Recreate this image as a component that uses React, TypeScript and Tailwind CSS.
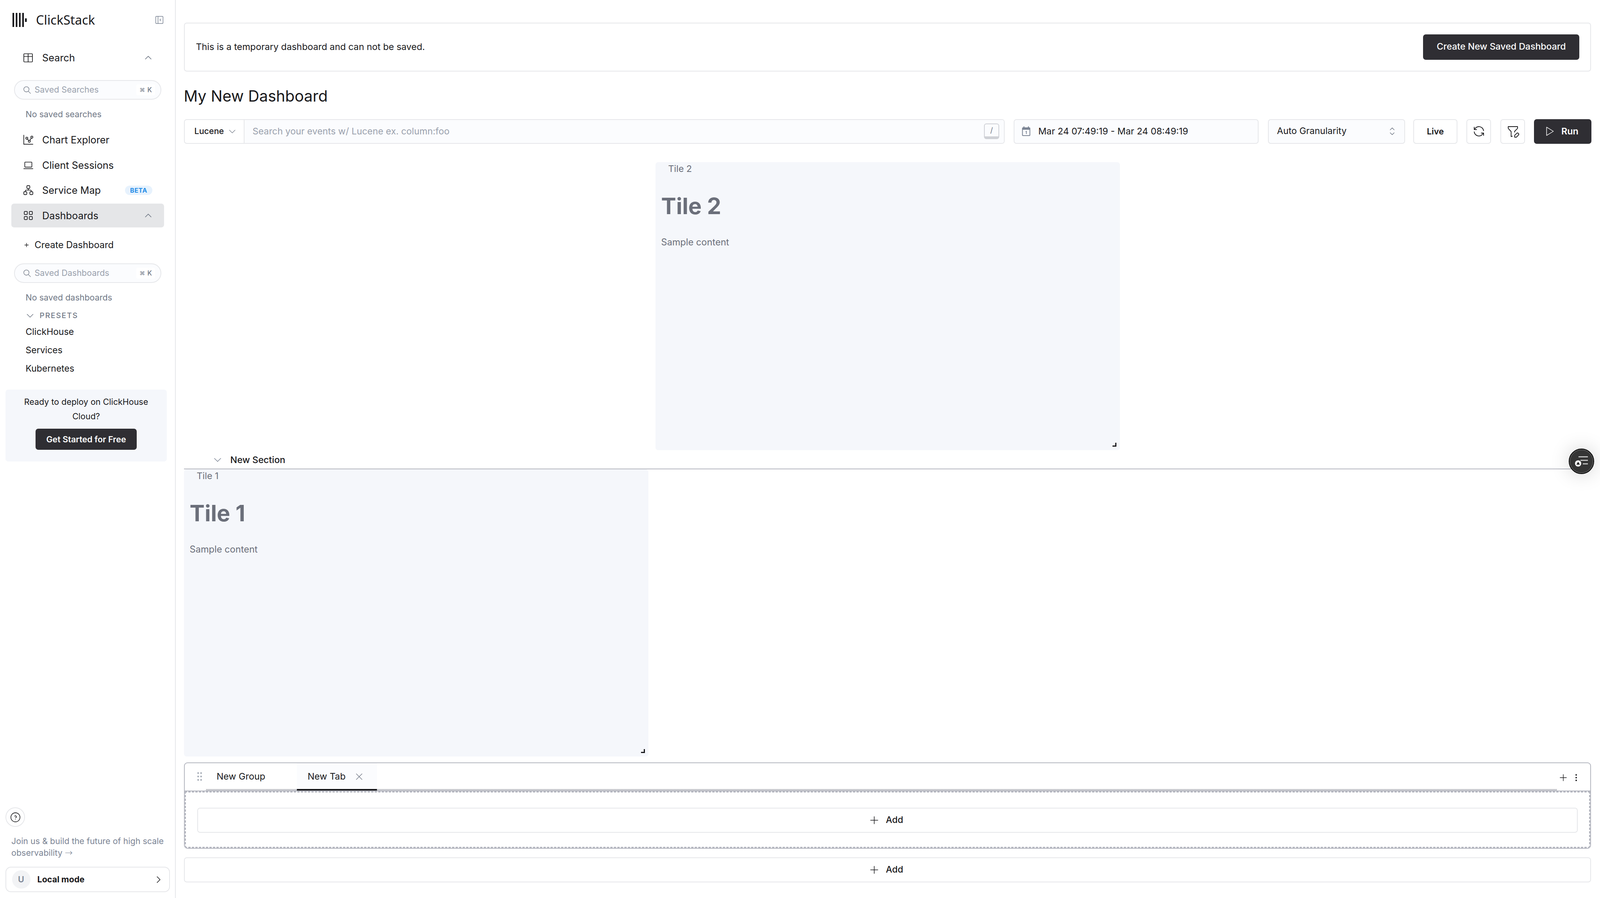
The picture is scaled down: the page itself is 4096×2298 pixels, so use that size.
import React from "react";
import {
  TbChartDots, TbDeviceLaptop, TbSitemap, TbLayoutGrid, TbLayoutSidebarLeftCollapse, TbChevronUp, TbChevronDown,
  TbSearch, TbHelpCircle, TbChevronRight, TbSelector, TbRefresh, TbGripVertical, TbPlus, TbDotsVertical, TbX,
  TbPlayerPlay, TbFilterEdit,
} from "react-icons/tb";

function Logo() {
  return (
    <svg width="37" height="36" viewBox="0 0 37 36" fill="#18181b">
      <rect x="0" y="0" width="4.2" height="36" />
      <rect x="8.3" y="0" width="4.2" height="36" />
      <rect x="16.6" y="0" width="4.2" height="36" />
      <rect x="24.9" y="0" width="4.2" height="36" />
      <rect x="32" y="14" width="4.5" height="9" />
    </svg>
  );
}

function TableIcon() {
  return (
    <svg width="24" height="24" viewBox="0 0 24 24" fill="none" stroke="#18181b" strokeWidth="1.7">
      <rect x="1" y="1.5" width="22" height="21" rx="1.5" />
      <path d="M1 8.5h22M12 1.5v21" />
    </svg>
  );
}

function CalIcon() {
  return (
    <svg width="22" height="26" viewBox="0 0 22 26">
      <rect x="0.5" y="3" width="21" height="22" rx="2.5" fill="#7b8494" />
      <rect x="4" y="0.5" width="2.6" height="5" fill="#7b8494" />
      <rect x="15.4" y="0.5" width="2.6" height="5" fill="#7b8494" />
      <rect x="2.5" y="9" width="17" height="14" rx="1" fill="#fbfcfe" />
      <path d="M9.5 14l2-1v7" stroke="#7b8494" strokeWidth="1.8" fill="none" />
    </svg>
  );
}

function Fab() {
  return (
    <div className="absolute left-[4016px] top-[1148px] w-[65px] h-[65px] rounded-full bg-[#353535] border-2 border-black flex items-center justify-center shadow-[0_0_50px_rgba(0,0,0,0.18)]">
      <div className="w-[61px] h-[61px] rounded-full border-2 border-[#555555] flex items-center justify-center">
        <svg width="34" height="30" viewBox="0 0 34 30">
          <path d="M9 3h24M14 12h19M20 21h13" stroke="#d8d8d8" strokeWidth="2.6" />
          <circle cx="8" cy="20" r="8" fill="#ffffff" />
          <path d="M8 15.5l4.5 7.5h-9z" fill="#1f1f1f" />
        </svg>
      </div>
    </div>
  );
}

function NavRow({ icon, label, right, active }: { icon: React.ReactNode; label: string; right?: React.ReactNode; active?: boolean }) {
  return (
    <div className={`h-[61px] mt-[3.7px] ml-[29px] w-[391px] pl-[31px] pr-[34px] rounded-[7px] flex items-center ${active ? "bg-[#e5e6e8]" : ""}`}>
      <span className="w-[24px] h-[24px] flex items-center justify-center shrink-0">{icon}</span>
      <span className="ml-[24px] text-[25.3px] leading-none text-[#18181b] grow">{label}</span>
      {right}
    </div>
  );
}

function SideInput({ placeholder }: { placeholder: string }) {
  return (
    <div className="h-[50px] ml-[36px] w-[377px] rounded-full border-2 border-[#e6e7ea] bg-[#fbfcfe] flex items-center pl-[20px] pr-[14px]">
      <TbSearch className="text-[#6f7785] shrink-0" size={23} strokeWidth={1.4} />
      <span className="ml-[7.5px] text-[21.5px] leading-none text-[#9aa1ad] grow">{placeholder}</span>
      <span className="rounded-[4px] bg-white px-[8px] h-[28px] flex items-center gap-[6px] text-[#6f7785] text-[17px] leading-none font-medium">
        <span className="text-[14px] font-normal">⌘</span>K
      </span>
    </div>
  );
}

function Sidebar() {
  return (
    <aside className="w-[450px] h-[2298px] shrink-0 border-r-2 border-[#e6e7ea] flex flex-col">
      <div className="h-[102px] pl-[32px] pr-[26px] flex items-center">
        <Logo />
        <span className="ml-[23px] text-[32.5px] leading-none text-[#18181b] grow font-['Noto_Sans',sans-serif]">ClickStack</span>
        <TbLayoutSidebarLeftCollapse className="text-[#7b8494]" size={28} strokeWidth={1.3} />
      </div>
      <div className="h-[61px] mt-[15px]">
        <div className="h-[61px] ml-[29px] w-[391px] pl-[31px] pr-[26.5px] flex items-center">
          <span className="w-[24px] h-[24px] flex items-center justify-center shrink-0"><TableIcon /></span>
          <span className="ml-[24px] text-[25.3px] leading-none text-[#18181b] grow">Search</span>
          <TbChevronUp className="text-[#6f7785]" size={29} strokeWidth={1.2} />
        </div>
      </div>
      <div className="mt-[27px]"><SideInput placeholder="Saved Searches" /></div>
      <div className="mt-[22px] ml-[65.5px] h-[32px] flex items-center text-[21.5px] leading-none text-[#6f7785]">No saved searches</div>
      <div className="mt-[14.3px]">
        <NavRow icon={<TbChartDots size={31} strokeWidth={1.3} className="text-[#18181b] shrink-0" />} label="Chart Explorer" />
        <NavRow icon={<TbDeviceLaptop size={31} strokeWidth={1.3} className="text-[#18181b] shrink-0" />} label="Client Sessions" />
        <NavRow
          icon={<TbSitemap size={31} strokeWidth={1.3} className="text-[#18181b] shrink-0" />}
          label="Service Map"
          right={<span className="h-[24px] px-[13px] -mr-[4px] rounded-full bg-[#e7f2fd] text-[#228be6] text-[16px] font-bold tracking-[0.6px] flex items-center leading-none">BETA</span>}
        />
        <NavRow active icon={<TbLayoutGrid size={31} strokeWidth={1.3} className="text-[#18181b] shrink-0" />} label="Dashboards" right={<TbChevronUp className="text-[#6f7785] -mr-[7.5px]" size={29} strokeWidth={1.2} />} />
      </div>
      <div className="mt-[29px] ml-[60px] h-[32px] flex items-center text-[#18181b]">
        <TbPlus size={16} strokeWidth={2} />
        <span className="ml-[12.5px] text-[23.6px] leading-none">Create Dashboard</span>
      </div>
      <div className="mt-[31px]"><SideInput placeholder="Saved Dashboards" /></div>
      <div className="mt-[22px] ml-[65.5px] h-[32px] flex items-center text-[21.5px] leading-none text-[#6f7785]">No saved dashboards</div>
      <div className="mt-[14px] ml-[62px] h-[32px] flex items-center text-[#6f7785]">
        <TbChevronDown size={30} strokeWidth={1.2} className="shrink-0" />
        <span className="ml-[9.5px] text-[19.2px] leading-none font-medium tracking-[1.9px]">PRESETS</span>
      </div>
      <div className="ml-[65.5px] mt-[2px] flex flex-col text-[23px] leading-[46.8px] text-[#18181b]">
        <span>ClickHouse</span>
        <span>Services</span>
        <span>Kubernetes</span>
      </div>
      <div className="mt-[31px] ml-[14px] w-[413px] h-[184px] rounded-[7px] bg-[#f5f7fb] flex flex-col items-center pt-[13px] text-[21.5px] leading-[37px] text-[#18181b] text-center">
        <span>Ready to deploy on ClickHouse</span>
        <span>Cloud?</span>
        <div className="mt-[13px] w-[259px] h-[54px] rounded-[7px] bg-[#2f2e33] text-white font-semibold flex items-center justify-center text-[21.5px] leading-none">Get Started for Free</div>
      </div>
      <div className="grow" />
      <div className="ml-[14px] w-[50px] h-[50px] rounded-full border-2 border-[#e6e7ea] flex items-center justify-center">
        <TbHelpCircle size={31} strokeWidth={1.25} className="text-[#18181b]" />
      </div>
      <div className="mt-[21px] ml-[29px] text-[21.5px] leading-[30px] text-[#7b8494]">
        <div>Join us &amp; build the future of high scale</div>
        <div>observability <span className="[font-family:'DejaVu_Sans',sans-serif] text-[24px] font-extralight">→</span></div>
      </div>
      <div className="mt-[21px] mb-[15px] ml-[14px] w-[421px] h-[65px] rounded-[14px] border-2 border-[#e6e7ea] flex items-center pl-[14.5px] pr-[12px]">
        <span className="w-[47px] h-[47px] rounded-full bg-[#f2f3f5] text-[#7b8494] font-semibold text-[21.5px] flex items-center justify-center leading-none">U</span>
        <span className="ml-[18px] text-[21.5px] leading-none font-bold text-[#18181b] grow">Local mode</span>
        <TbChevronRight size={30} strokeWidth={1.3} className="text-[#18181b]" />
      </div>
    </aside>
  );
}

function Box({ className, children }: { className: string; children?: React.ReactNode }) {
  return <div className={`h-[63px] rounded-[7px] border-2 border-[#e6e7ea] flex items-center shrink-0 ${className}`}>{children}</div>;
}

function Toolbar() {
  return (
    <div className="mt-[33px] flex items-center">
      <div className="h-[63px] w-[2101.5px] rounded-[7px] border-2 border-[#e6e7ea] flex overflow-hidden shrink-0">
        <div className="w-[153px] border-r-2 border-[#e6e7ea] flex items-center pl-[25px] shrink-0">
          <span className="text-[21.5px] leading-none font-medium text-[#18181b]">Lucene</span>
          <TbChevronDown size={29} strokeWidth={1.1} className="ml-[7px] text-[#6f7785] shrink-0" />
        </div>
        <div className="grow bg-[#fbfcfe] flex items-center pl-[21px] pr-[12px]">
          <span className="text-[23.35px] leading-none text-[#9aa1ad] grow">Search your events w/ Lucene ex. column:foo</span>
          <span className="w-[39px] h-[40px] rounded-[6px] border-2 border-b-[7px] border-[#cfd1d6] bg-[#fbfcfe] flex items-center justify-center text-[19px] leading-none text-[#6f7785]">/</span>
        </div>
      </div>
      <Box className="ml-[23px] w-[627px] bg-[#fbfcfe] pl-[19px]">
        <CalIcon />
        <span className="ml-[20px] text-[23.35px] leading-none text-[#18181b]">Mar 24 07:49:19 - Mar 24 08:49:19</span>
      </Box>
      <Box className="ml-[24px] w-[351px] bg-[#fbfcfe] pl-[21px] pr-[16px]">
        <span className="text-[23.2px] leading-none text-[#18181b] grow">Auto Granularity</span>
        <TbSelector size={30} strokeWidth={1.2} className="text-[#6f7785]" />
      </Box>
      <Box className="ml-[21px] w-[113px] justify-center">
        <span className="text-[22px] leading-none font-semibold text-[#18181b]">Live</span>
      </Box>
      <Box className="ml-[23px] w-[63px] justify-center">
        <TbRefresh size={36} strokeWidth={1.25} className="text-[#18181b] shrink-0" />
      </Box>
      <Box className="ml-[24px] w-[63px] justify-center">
        <TbFilterEdit size={36} strokeWidth={1.25} className="text-[#18181b] shrink-0" />
      </Box>
      <div className="ml-[23px] w-[147px] h-[63px] rounded-[7px] bg-[#2f2e33] flex items-center pl-[23px] shrink-0">
        <TbPlayerPlay size={32} strokeWidth={1.1} className="text-white shrink-0" />
        <span className="ml-[15px] text-[23.35px] leading-none font-semibold text-white">Run</span>
      </div>
    </div>
  );
}

function Tile({ name, className }: { name: string; className: string }) {
  return (
    <div className={`relative w-[1189px] rounded-[7px] bg-[#f5f7fb] text-[#6b6f7a] shrink-0 ${className}`}>
      <div className="h-[34px] pl-[33px] flex items-center text-[23.35px] leading-none">{name}</div>
      <div className="h-[124px] pt-[35px] pl-[15px] flex items-center text-[57.5px] leading-none font-bold">{name}</div>
      <div className="h-[32px] mt-[31px] pl-[15px] flex items-center text-[23.6px] leading-none">Sample content</div>
      <svg className="absolute right-[9px] bottom-[9px]" width="10" height="10" viewBox="0 0 10 10">
        <path d="M8.5 0v8.5H0" fill="none" stroke="#18181b" strokeWidth="3" />
      </svg>
    </div>
  );
}

function AddButton({ className }: { className: string }) {
  return (
    <div className={`h-[64px] rounded-[7px] border-2 border-[#e6e7ea] flex items-center justify-center text-[#18181b] ${className}`}>
      <TbPlus size={32} strokeWidth={1.15} className="-ml-[10px]" />
      <span className="ml-[14px] text-[23px] leading-none font-medium">Add</span>
    </div>
  );
}

function Group() {
  return (
    <div className="mt-[15px] h-[221px] rounded-[9px] border-2 border-[#b5b7c0] flex flex-col overflow-hidden">
      <div className="h-[72px] flex items-end shrink-0 border-b-2 border-[#b5b7c0] pl-[54px]">
        <div className="relative h-[70px] w-[3459px] border-b-[4px] border-[#cacbd0] shrink-0 flex items-center pt-[3px]">
          <TbGripVertical size={30} strokeWidth={1.4} className="absolute left-[-31px] top-[19px] text-[#9aa1ad]" />
          <span className="ml-[28px] text-[23.4px] leading-none text-[#18181b]">New Group</span>
          <div className="absolute left-[233px] top-0 h-[70px] w-[205px] bg-[#fbfcfe] border-b-[4px] border-[#18181b] flex items-center pl-[28px] pt-[3px]">
            <span className="text-[23.35px] leading-none text-[#18181b]">New Tab</span>
            <TbX size={29} strokeWidth={1.1} className="ml-[20px] text-[#6f7785] shrink-0" />
          </div>
        </div>
        <div className="h-[70px] flex items-center pl-[2px] pt-[4px]">
          <TbPlus size={28} strokeWidth={1.2} className="text-[#18181b] shrink-0" />
          <TbDotsVertical size={24} strokeWidth={1.8} className="ml-[7px] text-[#18181b] shrink-0" />
        </div>
      </div>
      <div className="grow border-[3px] border-dashed border-[#b5b7c0] pt-[39px] px-[29.5px]">
        <AddButton className="" />
      </div>
    </div>
  );
}

function Main() {
  return (
    <main className="w-[3646px] pl-[20.5px] pr-[22.7px] pt-[57.5px] flex flex-col relative">
      <div className="h-[125px] rounded-[7px] border-2 border-[#e6e7ea] flex items-center justify-between pl-[29px] pr-[28px]">
        <span className="text-[23.35px] leading-none text-[#18181b]">This is a temporary dashboard and can not be saved.</span>
        <div className="w-[400px] h-[65px] rounded-[7px] bg-[#2f2e33] text-white text-[23.1px] leading-none font-medium flex items-center justify-center">Create New Saved Dashboard</div>
      </div>
      <div className="mt-[39px] h-[50px] flex items-center text-[39.5px] leading-none text-[#18181b]">My New Dashboard</div>
      <Toolbar />
      <Tile name="Tile 2" className="mt-[47px] ml-[1207px] h-[737px]" />
      <div className="mt-[7px] h-[37px] pl-[70px] flex items-center text-[#18181b]">
        <TbChevronDown size={32} strokeWidth={1.1} className="text-[#7b8494] shrink-0" />
        <span className="ml-[17px] text-[23.35px] leading-none font-medium">New Section</span>
      </div>
      <div className="mt-[3px] h-[2px] bg-[#b5b7c0] w-[3602.8px]" />
      <Tile name="Tile 1" className="h-[735px]" />
      <Group />
      <AddButton className="mt-[22px]" />
    </main>
  );
}

export default function App() {
  return (
    <div className="relative w-[4096px] h-[2298px] overflow-hidden bg-white flex [font-family:Inter,sans-serif]">
      <Sidebar />
      <Main />
      <Fab />
    </div>
  );
}
